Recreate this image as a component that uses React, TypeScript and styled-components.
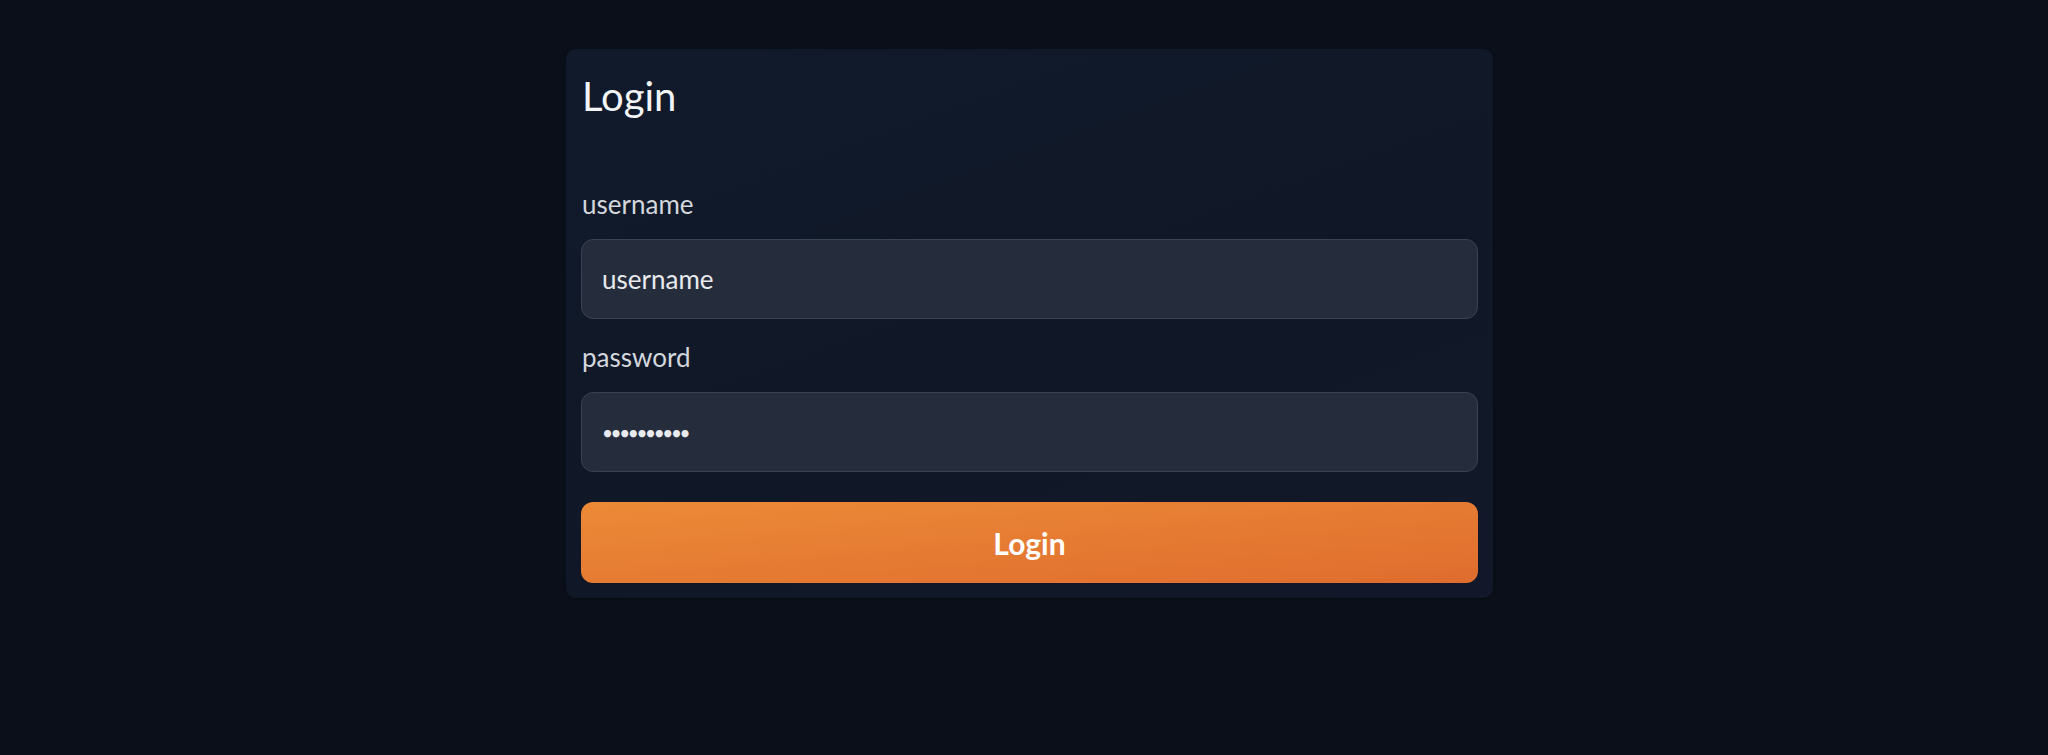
import styled, { createGlobalStyle } from "styled-components";

const GlobalStyle = createGlobalStyle`
  html, body {
    margin: 0;
    padding: 0;
    background: #0b0f19;
  }
  body {
    font-family: Lato, "Noto Sans", sans-serif;
    color: #e5e7eb;
  }
`;

const Page = styled.div`
  display: flex;
  justify-content: center;
  min-height: 755px;
  padding: 49px 0 0 11px;
  box-sizing: border-box;
  background: #0b0f19;
`;

const Card = styled.div`
  width: 927px;
  height: 549px;
  box-sizing: border-box;
  padding: 16px 15px 14px;
  display: flex;
  flex-direction: column;
  background: linear-gradient(160deg, #111a2b 0%, #101827 60%, #121829 100%);
  border-radius: 10px;
  box-shadow: 0 1px 3px rgba(0, 0, 0, 0.3);
`;

const Title = styled.h1`
  margin: 8px 0 0 1px;
  font-size: 40px;
  font-weight: 400;
  line-height: 46px;
  color: #f3f4f6;
`;

const Form = styled.form`
  display: flex;
  flex-direction: column;
  margin-top: 70px;
`;

const Field = styled.div`
  display: flex;
  flex-direction: column;
  gap: 20px;
  margin-bottom: 23px;
`;

const Label = styled.label`
  font-size: 26px;
  line-height: 30px;
  color: #d4d7dd;
  padding-left: 1px;
`;

const Input = styled.input<{ $secret?: boolean }>`
  height: 80px;
  box-sizing: border-box;
  padding: 0 20px;
  border: 1px solid #384253;
  border-radius: 12px;
  background: #252d3c;
  color: #e8eaee;
  font-family: Lato, "Noto Sans", sans-serif;
  font-size: ${(p) => (p.$secret ? "19px" : "26px")};
  letter-spacing: ${(p) => (p.$secret ? "-2.4px" : "normal")};
  outline: none;
`;

const Button = styled.button`
  margin-top: 7px;
  height: 81px;
  border: none;
  border-radius: 12px;
  background: linear-gradient(to bottom right, #ec8a37, #df6d2e);
  color: #ffffff;
  font-family: Lato, "Noto Sans", sans-serif;
  font-size: 30px;
  font-weight: 700;
  cursor: pointer;
`;

export default function App() {
  return (
    <>
      <GlobalStyle />
      <Page>
        <Card>
          <Title>Login</Title>
          <Form onSubmit={(e) => e.preventDefault()}>
            <Field>
              <Label htmlFor="username">username</Label>
              <Input id="username" type="text" defaultValue="username" />
            </Field>
            <Field>
              <Label htmlFor="password">password</Label>
              <Input id="password" type="password" defaultValue="0123456789" $secret />
            </Field>
            <Button type="submit">Login</Button>
          </Form>
        </Card>
      </Page>
    </>
  );
}
